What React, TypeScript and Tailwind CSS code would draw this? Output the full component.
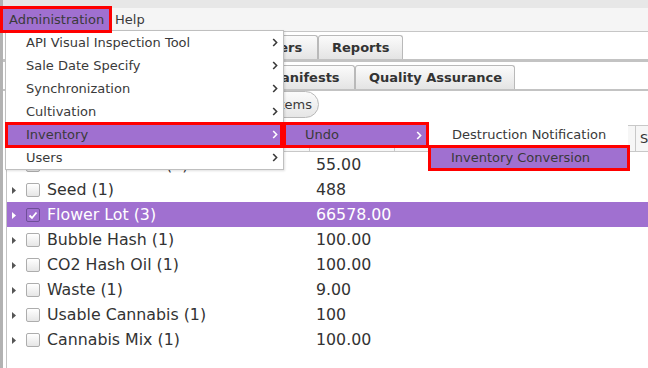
import React from 'react'

const PURPLE = 'bg-[#a070d0]'

function Chevron({ white }: { white?: boolean }) {
  return (
    <svg width="6" height="9" viewBox="0 0 6 9" className="shrink-0">
      <polyline
        points="1.2,1 4.6,4.5 1.2,8"
        fill="none"
        stroke={white ? '#ffffff' : '#3a3a3a'}
        strokeWidth="1.6"
      />
    </svg>
  )
}

function Triangle({ white }: { white?: boolean }) {
  return (
    <svg width="4" height="7" viewBox="0 0 4 7" className="shrink-0">
      <polygon points="0,0 4,3.5 0,7" fill={white ? '#ffffff' : '#555555'} />
    </svg>
  )
}

function Checkbox({ checked }: { checked?: boolean }) {
  if (checked) {
    return (
      <span className="ml-[10px] flex h-[14px] w-[14px] shrink-0 items-center justify-center rounded-[2px] border border-[#6f4f98] bg-[#a070d0]">
        <svg width="10" height="9" viewBox="0 0 10 9">
          <polyline points="1.5,4.5 4,7 8.5,1.5" fill="none" stroke="#ffffff" strokeWidth="1.8" />
        </svg>
      </span>
    )
  }
  return (
    <span className="ml-[10px] block h-[14px] w-[14px] shrink-0 rounded-[2px] border border-[#adadad] bg-gradient-to-b from-white to-[#e6e6e6]" />
  )
}

const tabs1: [string, string][] = [
  ['Transfers', 'w-[98px]'],
  ['Reports', 'w-[85px]'],
]

const tabs2: [string, string][] = [
  ['Manifests', 'w-[101px]'],
  ['Quality Assurance', 'w-[160px]'],
]

const rows = [
  { name: 'Other Material (1)', qty: '55.00' },
  { name: 'Seed (1)', qty: '488' },
  { name: 'Flower Lot (3)', qty: '66578.00', selected: true },
  { name: 'Bubble Hash (1)', qty: '100.00' },
  { name: 'CO2 Hash Oil (1)', qty: '100.00' },
  { name: 'Waste (1)', qty: '9.00' },
  { name: 'Usable Cannabis (1)', qty: '100' },
  { name: 'Cannabis Mix (1)', qty: '100.00' },
]

const menuItems = [
  'API Visual Inspection Tool',
  'Sale Date Specify',
  'Synchronization',
  'Cultivation',
  'Inventory',
  'Users',
]

function Tab({ label, width }: { label: string; width: string }) {
  return (
    <div
      className={`${width} flex h-[24px] shrink-0 items-center rounded-t-[3px] border border-b-0 border-[#b9b9b9] bg-gradient-to-b from-[#fbfbfb] to-[#e4e4e4] pl-[13px] font-bold text-[#333]`}
    >
      {label}
    </div>
  )
}

export default function App() {
  return (
    <div className="relative flex h-[368px] w-[648px] overflow-hidden bg-white font-['DejaVu_Sans',sans-serif] text-[13px] text-[#3a3a3a]">
      <div className="w-[3px] shrink-0 bg-[#b2b2b2]" />
      <div className="flex min-w-0 flex-1 flex-col">
        <div className="h-[8px] bg-[#e7e7e7]" />
        <div className="flex h-[24px] items-center border-b border-[#c6c6c6] bg-[#f5f5f5]">
          <div className={`relative z-10 -ml-[3px] flex h-[27px] w-[112px] shrink-0 items-center border-[3px] border-[#ff0000] ${PURPLE} pl-[6px]`}>
            Administration
          </div>
          <span className="ml-[3px]">Help</span>
        </div>

        <div className="flex flex-1 flex-col">
          <div className="flex pl-[217px] pt-[3px]">
            {tabs1.map(([l, w]) => (
              <Tab key={l} label={l} width={w} />
            ))}
          </div>
          <div className="h-[3px] bg-[#c3c3c3]" />
          <div className="flex pl-[251px] pt-[3px]">
            {tabs2.map(([l, w]) => (
              <Tab key={l} label={l} width={w} />
            ))}
          </div>
          <div className="h-[2px] bg-[#c3c3c3]" />
          <div className="flex h-[27px] pl-[238px]">
            <div className="flex h-[27px] w-[78px] items-center justify-end rounded-full border border-[#b9b9b9] bg-gradient-to-b from-[#fbfbfb] to-[#e6e6e6] pr-[6px]">
              Items
            </div>
          </div>

          <div className="mt-[7px] ml-[3px] flex flex-1 flex-col border-l border-[#c4c4c4]">
            <div className="flex h-[27px] border-y border-[#c8c8c8] bg-[#f6f6f6] text-[#333]">
              <div className="w-[303px] shrink-0 border-r border-[#c8c8c8]" />
              <div className="w-[85px] shrink-0 border-r border-[#c8c8c8]" />
              <div className="w-[117px] shrink-0 border-r border-[#c8c8c8]" />
              <div className="w-[116px] shrink-0 border-r border-[#c8c8c8]" />
              <div className="w-[8px] shrink-0 border-r border-[#c8c8c8]" />
              <div className="flex-1 pl-[4px] leading-[25px]">S</div>
            </div>
            {rows.map((r) => (
              <div
                key={r.name}
                className={`flex h-[25px] shrink-0 items-center pt-[1px] text-[15.8px] ${
                  r.selected ? `${PURPLE} text-white` : 'text-[#333]'
                }`}
              >
                <div className="flex w-[303px] shrink-0 items-center pl-[5px]">
                  <Triangle white={r.selected} />
                  <Checkbox checked={r.selected} />
                  <span className="ml-[7px] whitespace-nowrap">{r.name}</span>
                </div>
                <div className="pl-[6px]">{r.qty}</div>
              </div>
            ))}
          </div>
        </div>
      </div>

      {/* Administration dropdown */}
      <div className="absolute left-[5px] top-[30px] w-[279px] border border-[#bfbfbf] bg-white shadow-[1px_1px_2px_rgba(0,0,0,0.12)]">
        {menuItems.map((m) =>
          m === 'Inventory' ? (
            <div key={m} className={`relative flex h-[23px] items-center justify-between ${PURPLE} pl-[20px] pr-[5px]`}>
              <span>{m}</span>
              <Chevron white />
              <div className="absolute -left-[1px] -top-[1px] -bottom-[2px] right-0 border-[3px] border-[#ff0000]" />
            </div>
          ) : (
            <div key={m} className="flex h-[23px] items-center justify-between pl-[20px] pr-[5px]">
              <span>{m}</span>
              <Chevron />
            </div>
          )
        )}
      </div>

      {/* Inventory submenu */}
      <div className={`absolute left-[283px] top-[122px] flex h-[26px] w-[146px] items-center justify-between border-[3px] border-[#ff0000] ${PURPLE} pl-[19px] pr-[4px]`}>
        <span>Undo</span>
        <Chevron white />
      </div>

      {/* Undo submenu */}
      <div className="absolute left-[429px] top-[121px] flex w-[199px] flex-col bg-white">
        <div className="flex h-[24px] items-center pl-[23px] pt-[3px]">Destruction Notification</div>
        <div className={`-ml-[1px] flex h-[26px] w-[202px] items-center border-[3px] border-[#ff0000] ${PURPLE} pl-[20px]`}>
          Inventory Conversion
        </div>
      </div>
    </div>
  )
}
